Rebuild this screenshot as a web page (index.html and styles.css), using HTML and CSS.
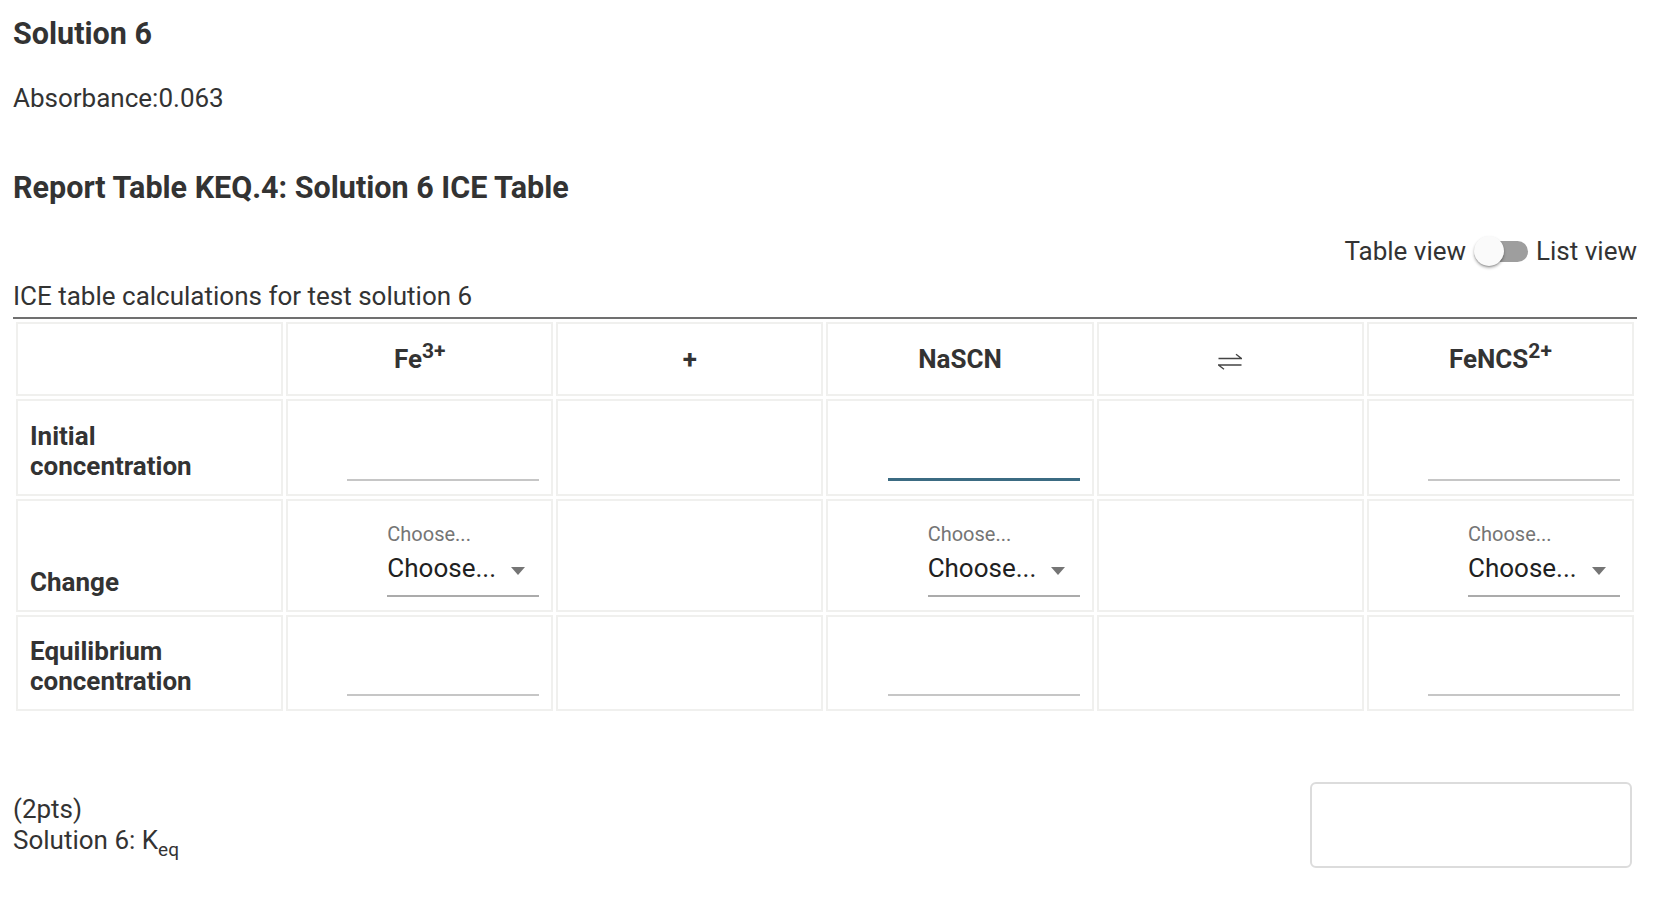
FILE: index.html
```html
<!DOCTYPE html>
<html lang="en">
<head>
<meta charset="utf-8">
<title>Solution 6</title>
<link rel="stylesheet" href="styles.css">
</head>
<body>
<main class="page">
  <h2 class="title">Solution 6</h2>
  <p class="absorb">Absorbance:0.063</p>
  <h2 class="report">Report Table KEQ.4: Solution 6 ICE Table</h2>
  <div class="toggle-row">
    <span class="toggle-text">Table view</span>
    <span class="switch"><span class="track"></span><span class="thumb"></span></span>
    <span class="toggle-text">List view</span>
  </div>
  <div class="caption">ICE table calculations for test solution 6</div>
  <table class="ice">
    <tr class="row-head">
      <th class="corner"></th>
      <th>Fe<sup>3+</sup></th>
      <th>+</th>
      <th>NaSCN</th>
      <th>
        <svg class="eq-arrow" width="24" height="17" viewBox="0 0 24 17">
          <path d="M0.5 5.5 H23.5 L18 1.2" fill="none" stroke="#444" stroke-width="1.3"/>
          <path d="M23.5 12 H0.5 L6 16.3" fill="none" stroke="#444" stroke-width="1.3"/>
        </svg>
      </th>
      <th>FeNCS<sup>2+</sup></th>
    </tr>
    <tr class="row-init">
      <th class="label">Initial<br>concentration</th>
      <td class="field"><div class="inp"></div></td>
      <td></td>
      <td class="field"><div class="inp focus"></div></td>
      <td></td>
      <td class="field"><div class="inp"></div></td>
    </tr>
    <tr class="row-change">
      <th class="label">Change</th>
      <td class="field">
        <div class="sel">
          <div class="sel-label">Choose...</div>
          <div class="sel-value"><span>Choose...</span><span class="caret"></span></div>
        </div>
      </td>
      <td></td>
      <td class="field">
        <div class="sel">
          <div class="sel-label">Choose...</div>
          <div class="sel-value"><span>Choose...</span><span class="caret"></span></div>
        </div>
      </td>
      <td></td>
      <td class="field">
        <div class="sel">
          <div class="sel-label">Choose...</div>
          <div class="sel-value"><span>Choose...</span><span class="caret"></span></div>
        </div>
      </td>
    </tr>
    <tr class="row-eq">
      <th class="label">Equilibrium<br>concentration</th>
      <td class="field"><div class="inp"></div></td>
      <td></td>
      <td class="field"><div class="inp"></div></td>
      <td></td>
      <td class="field"><div class="inp"></div></td>
    </tr>
  </table>
  <div class="keq-row">
    <div class="keq-label">(2pts)<br>Solution 6: K<sub>eq</sub></div>
    <div class="keq-box"></div>
  </div>
</main>
</body>
</html>
```

FILE: styles.css
```css
html, body {
  margin: 0;
  padding: 0;
  background: #ffffff;
}

body {
  font-family: Roboto, "Noto Sans", "Liberation Sans", sans-serif;
  color: #333333;
}

.page {
  padding: 0 43px 0 13px;
}

.title {
  margin: 16px 0 0;
  font-size: 30.5px;
  line-height: 36px;
  font-weight: 700;
  color: #333;
}

.absorb {
  margin: 30px 0 0;
  font-size: 26px;
  line-height: 32px;
  font-weight: 400;
}

.report {
  margin: 56px 0 0;
  font-size: 30.5px;
  line-height: 36px;
  font-weight: 700;
  color: #333;
}

.toggle-row {
  margin-top: 29px;
  height: 32px;
  display: flex;
  justify-content: flex-end;
  align-items: center;
  gap: 8px;
  font-size: 26px;
  line-height: 32px;
}

.switch {
  position: relative;
  width: 54px;
  height: 30px;
  display: inline-block;
}

.track {
  position: absolute;
  left: 16px;
  top: 5px;
  width: 38px;
  height: 21px;
  border-radius: 11px;
  background: #9e9e9e;
}

.thumb {
  position: absolute;
  left: 0;
  top: 0;
  width: 30px;
  height: 30px;
  border-radius: 50%;
  background: #fafafa;
  box-shadow: 0 2px 3px rgba(0, 0, 0, 0.3), 0 1px 1px rgba(0, 0, 0, 0.15);
}

.caption {
  margin-top: 13px;
  font-size: 26px;
  line-height: 32px;
  padding-bottom: 5px;
  border-bottom: 2px solid #707070;
}

.ice {
  width: 100%;
  table-layout: fixed;
  border-collapse: separate;
  border-spacing: 3px;
}

.ice th,
.ice td {
  border: 2px solid #f0f0ee;
  padding: 0 12px 13px 12px;
  font-size: 26px;
  line-height: 30px;
  color: #333;
}

.row-head th {
  font-weight: 700;
  text-align: center;
  vertical-align: middle;
  padding: 0 8px;
}

.row-head { height: 74px; }
.row-init { height: 97px; }
.row-change { height: 113px; }
.row-eq { height: 96px; }

.ice sup {
  font-size: 21px;
  line-height: 0;
  vertical-align: 10px;
}

.eq-arrow {
  display: inline-block;
  vertical-align: -2px;
}

.label {
  text-align: left;
  font-weight: 700;
  vertical-align: bottom;
}

.ice td {
  vertical-align: bottom;
}

.field {
  text-align: right;
}

.inp {
  display: inline-block;
  width: 192px;
  height: 40px;
  border-bottom: 2px solid #c6c6c6;
  vertical-align: bottom;
}

.inp.focus {
  border-bottom: 3px solid #3b6b82;
  height: 39px;
}

.sel {
  display: inline-block;
  width: 152px;
  text-align: left;
  border-bottom: 2px solid #ababab;
  vertical-align: bottom;
}

.sel-label {
  font-size: 20px;
  line-height: 24px;
  color: #757575;
  margin-bottom: 5px;
}

.sel-value {
  display: flex;
  align-items: center;
  font-size: 26px;
  line-height: 34px;
  color: #212121;
  padding-bottom: 10px;
}

.caret {
  width: 0;
  height: 0;
  margin-left: 15px;
  margin-top: 6px;
  border-left: 7.5px solid transparent;
  border-right: 7.5px solid transparent;
  border-top: 8px solid #757575;
}

.keq-row {
  margin-top: 68px;
  display: flex;
  justify-content: space-between;
  align-items: center;
}

.keq-label {
  font-size: 26px;
  line-height: 31px;
  color: #333;
}

.keq-label sub {
  font-size: 19px;
  line-height: 0;
  vertical-align: -7px;
}

.keq-box {
  width: 318px;
  height: 82px;
  margin-right: 5px;
  border: 2px solid #dcdcdc;
  border-radius: 6px;
}
```
